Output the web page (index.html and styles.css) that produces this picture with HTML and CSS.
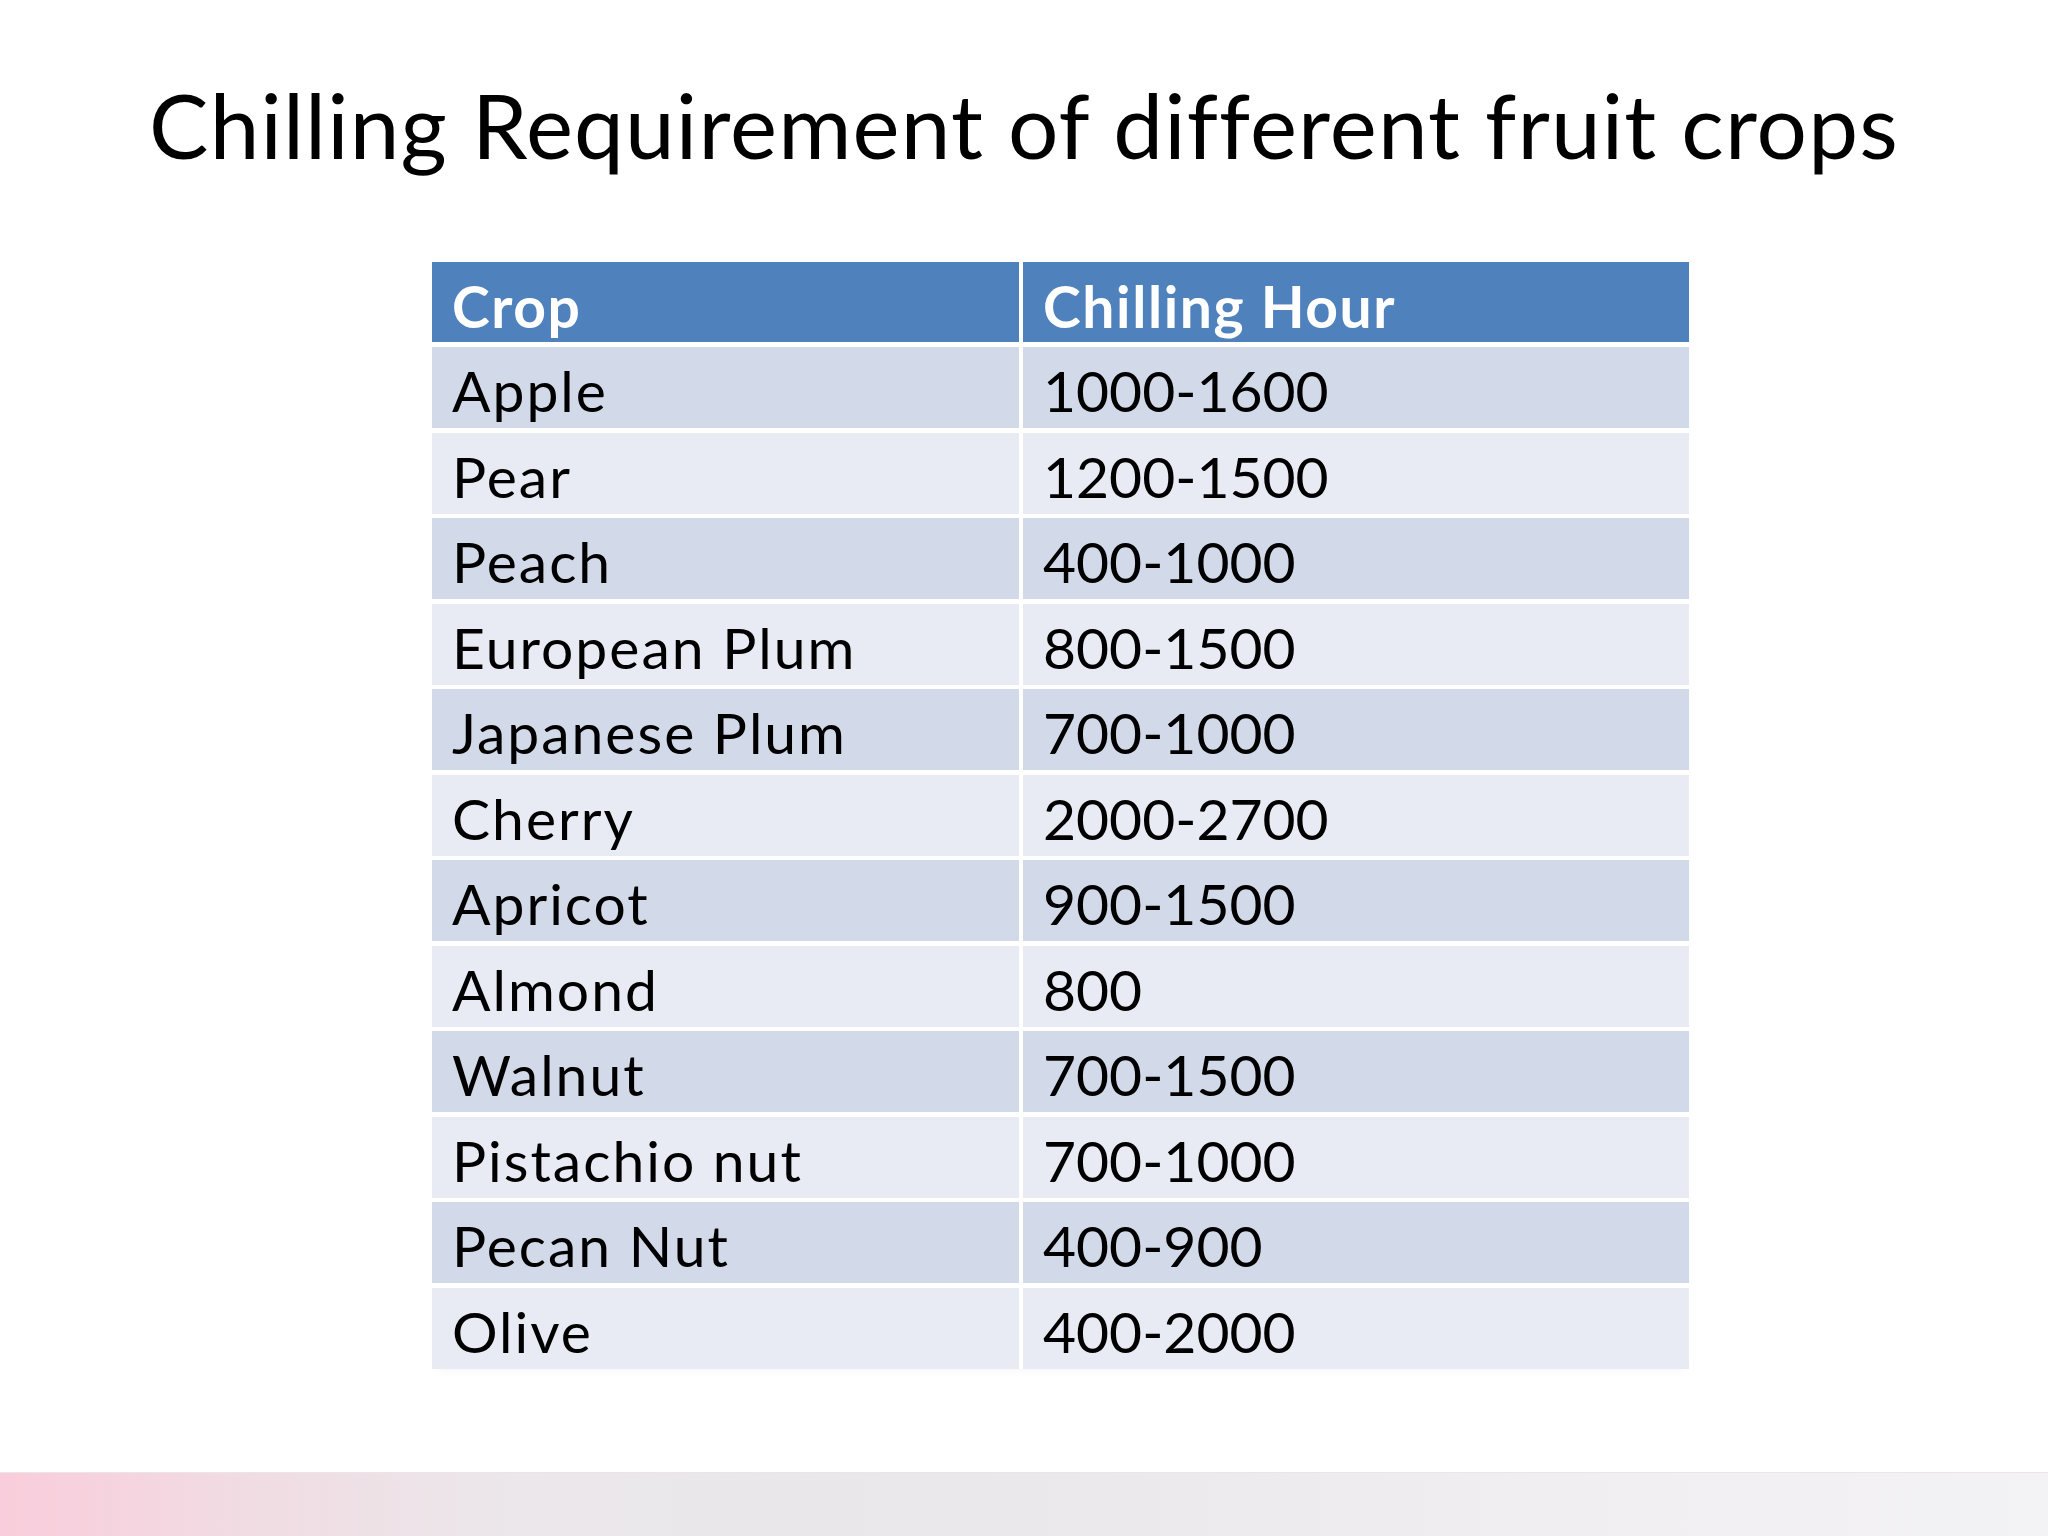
FILE: index.html
```html
<!DOCTYPE html>
<html lang="en">
<head>
<meta charset="utf-8">
<title>Chilling Requirement of different fruit crops</title>
<link rel="stylesheet" href="styles.css">
</head>
<body>
<div class="slide">
  <h1 class="title">Chilling Requirement of different fruit crops</h1>
  <div class="table">
    <div class="cell head">Crop</div><div class="cell head">Chilling Hour</div>
    <div class="cell band1">Apple</div><div class="cell band1 num">1000-1600</div>
    <div class="cell band2">Pear</div><div class="cell band2 num">1200-1500</div>
    <div class="cell band1">Peach</div><div class="cell band1 num">400-1000</div>
    <div class="cell band2">European Plum</div><div class="cell band2 num">800-1500</div>
    <div class="cell band1">Japanese Plum</div><div class="cell band1 num">700-1000</div>
    <div class="cell band2">Cherry</div><div class="cell band2 num">2000-2700</div>
    <div class="cell band1">Apricot</div><div class="cell band1 num">900-1500</div>
    <div class="cell band2">Almond</div><div class="cell band2 num">800</div>
    <div class="cell band1">Walnut</div><div class="cell band1 num">700-1500</div>
    <div class="cell band2">Pistachio nut</div><div class="cell band2 num">700-1000</div>
    <div class="cell band1">Pecan Nut</div><div class="cell band1 num">400-900</div>
    <div class="cell band2">Olive</div><div class="cell band2 num">400-2000</div>
  </div>
  <div class="spacer"></div>
  <div class="footer-bar"></div>
</div>
</body>
</html>
```
FILE: styles.css
```css
html, body {
  margin: 0;
  padding: 0;
  background: #ffffff;
}
.slide {
  width: 2048px;
  height: 1536px;
  display: flex;
  flex-direction: column;
  font-family: Lato, "Open Sans", "Liberation Sans", sans-serif;
  color: #000;
  overflow: hidden;
}
.title {
  margin: 0;
  padding-top: 75px;
  height: 182px;
  box-sizing: border-box;
  font-weight: 400;
  font-size: 89px;
  line-height: 100px;
  text-align: center;
  letter-spacing: 1.15px;
}
.table {
  margin-left: 432px;
  width: 1257px;
  display: grid;
  grid-template-columns: 587px 666px;
  grid-auto-rows: 80.8px;
  column-gap: 4px;
  row-gap: 4.7px;
  box-shadow: 0 6px 10px -6px rgba(0, 0, 0, 0.06);
  margin-top: 80px;
}
.cell {
  display: flex;
  align-items: center;
  padding: 6px 0 0 20px;
  box-sizing: border-box;
  font-size: 57px;
  line-height: 1;
  letter-spacing: 2px;
}
.num {
  letter-spacing: 0;
}
.head {
  background: #4f81bd;
  color: #ffffff;
  font-weight: 700;
  margin-bottom: 4px;
  height: 80px;
  padding-top: 9px;
  letter-spacing: 1.6px;
}
.band1 {
  background: #d2d9e8;
}
.band2 {
  background: #e8ebf3;
}
.spacer {
  flex: 1;
}
.footer-bar {
  height: 63px;
  border-top: 1px solid #ebe4e8;
  background: linear-gradient(90deg, #f9cddb 0%, #f1dce3 12%, #ebe7ea 25%, #eae8ea 50%, #f0eef1 75%, #f3f2f5 100%);
}
```
